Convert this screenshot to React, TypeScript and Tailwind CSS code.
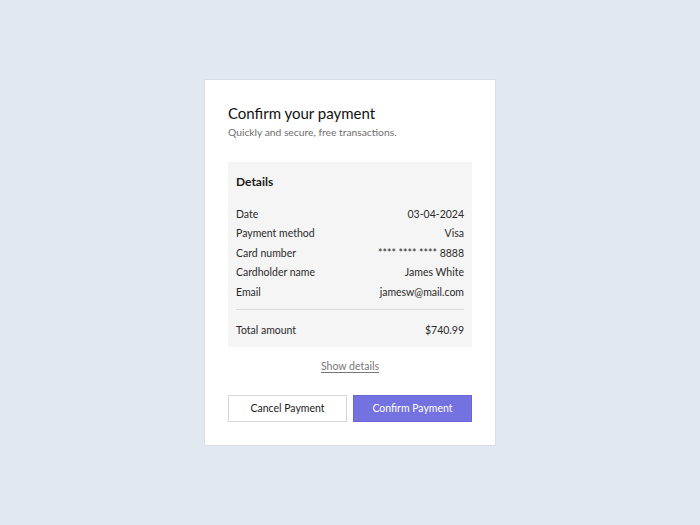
import React from 'react';

const rows: [string, string][] = [
  ['Date', '03-04-2024'],
  ['Payment method', 'Visa'],
  ['Card number', '**** **** **** 8888'],
  ['Cardholder name', 'James White'],
  ['Email', 'jamesw@mail.com'],
];

const App: React.FC = () => {
  return (
    <div
      className="min-h-screen w-full bg-[#e1e8f0] flex items-start justify-center pt-[79px]"
      style={{ fontFamily: 'Lato, "Noto Sans", sans-serif' }}
    >
      <div className="w-[292px] bg-white border border-[#d8dde4] p-[23px]">
        <h1 className="text-[15px] leading-[20px] text-[#111]">Confirm your payment</h1>
        <p className="mt-[1px] text-[10.3px] leading-[16px] text-[#6e6e6e]">
          Quickly and secure, free transactions.
        </p>

        <section className="mt-[22px] bg-[#f5f5f5] px-[8px] pt-[12px] pb-[6px]">
          <h2 className="text-[12px] leading-[16px] font-bold text-[#1a1a1a]">Details</h2>
          <div className="mt-[15px]">
            {rows.map(([label, value]) => (
              <div key={label} className="flex justify-between h-[19.5px] items-center text-[10.5px] text-[#2b2b2b]">
                <span>{label}</span>
                <span>{value}</span>
              </div>
            ))}
          </div>
          <div className="mt-[6px] border-t border-[#dcdcdc]"></div>
          <div className="mt-[12px] flex justify-between h-[19.5px] items-center text-[10.5px] text-[#2b2b2b]">
            <span>Total amount</span>
            <span>$740.99</span>
          </div>
        </section>

        <div className="mt-[9px] text-center leading-[16px]">
          <button className="text-[10.5px] text-[#777] underline underline-offset-2">Show details</button>
        </div>

        <div className="mt-[21px] flex gap-[6px]">
          <button className="flex-1 h-[27px] border border-[#d6d6d6] bg-white text-[10.5px] font-normal text-[#1a1a1a]">
            Cancel Payment
          </button>
          <button className="flex-1 h-[27px] border border-[#6a66d8] bg-[#7471e1] text-[10.5px] font-normal text-white">
            Confirm Payment
          </button>
        </div>
      </div>
    </div>
  );
};

export default App;
